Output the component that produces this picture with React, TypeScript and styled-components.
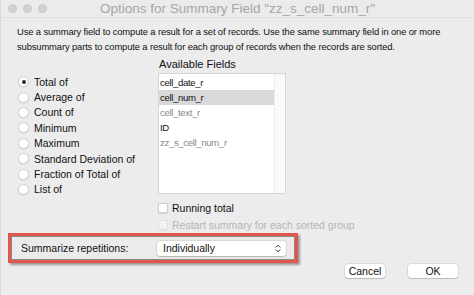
import React, { useState } from 'react';
import styled, { createGlobalStyle } from 'styled-components';

const GlobalStyle = createGlobalStyle`
  html, body {
    margin: 0;
    padding: 0;
    background: #ececec;
  }
  body {
    font-family: 'Liberation Sans', Arial, sans-serif;
  }
`;

const Window = styled.div`
  width: 474px;
  height: 295px;
  background: #ececec;
  display: flex;
  flex-direction: column;
  box-sizing: border-box;
  border-left: 1px solid #d8d8d8;
  overflow: hidden;
`;

const TitleBar = styled.div`
  height: 17px;
  display: flex;
  align-items: center;
  position: relative;
  background: #ebebeb;
  border-bottom: 1px solid #e0e0e0;
`;

const Lights = styled.div`
  display: flex;
  gap: 6px;
  padding-left: 7px;
`;

const Light = styled.span`
  width: 9px;
  height: 9px;
  border-radius: 50%;
  background: #d3d3d3;
  border: 1px solid #c8c8c8;
  box-sizing: border-box;
`;

const Title = styled.div`
  position: absolute;
  left: 0;
  right: 0;
  text-align: center;
  font-size: 13.5px;
  color: #a6a6a6;
  pointer-events: none;
`;

const Body = styled.div`
  flex: 1;
  display: flex;
  flex-direction: column;
  padding: 6px 0 0 16px;
`;

const Description = styled.p`
  margin: 0;
  font-size: 9.4px;
  letter-spacing: -0.12px;
  line-height: 15px;
  color: #111;
  width: 450px;
`;

const Main = styled.div`
  display: flex;
  margin-top: 3px;
`;

const RadioGroup = styled.div`
  width: 141px;
  padding-top: 17px;
  display: flex;
  flex-direction: column;
`;

const RadioRow = styled.label`
  display: flex;
  align-items: center;
  gap: 5px;
  height: 15.4px;
  font-size: 10.5px;
  color: #111;
  margin-left: 1px;
`;

const RadioCircle = styled.span<{ $checked: boolean }>`
  width: 11px;
  height: 11px;
  border-radius: 50%;
  box-sizing: border-box;
  background: #fff;
  border: 1px solid #d2d2d2;
  box-shadow: 0 0.5px 1px rgba(0, 0, 0, 0.12);
  display: flex;
  align-items: center;
  justify-content: center;

  &::after {
    content: '';
    width: 4px;
    height: 4px;
    border-radius: 50%;
    background: ${(p) => (p.$checked ? '#2a2a2a' : 'transparent')};
  }
`;

const FieldsColumn = styled.div`
  display: flex;
  flex-direction: column;
`;

const FieldsLabel = styled.div`
  font-size: 11px;
  color: #111;
  padding-left: 1px;
  height: 16px;
  line-height: 14px;
`;

const ListBox = styled.div`
  width: 128px;
  height: 121px;
  box-sizing: border-box;
  background: #fff;
  border: 1px solid #d6d6d6;
  display: flex;
`;

const ListItems = styled.div`
  flex: 1;
  padding-top: 1px;
`;

const ListItem = styled.div<{ $dim?: boolean; $selected?: boolean }>`
  height: 15px;
  line-height: 15px;
  font-size: 9.6px;
  letter-spacing: -0.35px;
  padding-left: 1px;
  color: ${(p) => (p.$dim ? '#8a8a8a' : '#111')};
  background: ${(p) => (p.$selected ? '#d9d9d9' : 'transparent')};
`;

const Gutter = styled.div`
  width: 10px;
  background: #fafafa;
  border-left: 1px solid #ececec;
`;

const CheckRow = styled.label<{ $disabled?: boolean }>`
  display: flex;
  align-items: center;
  gap: 4px;
  height: 17px;
  font-size: 10.5px;
  color: ${(p) => (p.$disabled ? '#b5b5b5' : '#111')};
`;

const CheckBox = styled.span<{ $disabled?: boolean }>`
  width: 10px;
  height: 10px;
  box-sizing: border-box;
  border-radius: 2px;
  background: ${(p) => (p.$disabled ? '#f3f3f3' : '#fff')};
  border: 1px solid ${(p) => (p.$disabled ? '#e0e0e0' : '#cfcfcf')};
  box-shadow: 0 0.5px 1px rgba(0, 0, 0, ${(p) => (p.$disabled ? 0.04 : 0.12)});
`;

const Checks = styled.div`
  margin-top: 5px;
  display: flex;
  flex-direction: column;
`;

const Highlight = styled.div`
  margin: 0 0 0 -9px;
  width: 290px;
  height: 30px;
  box-sizing: border-box;
  border: 3px solid #e2574c;
  box-shadow: inset 0 0 0 1px rgba(60, 60, 60, 0.55), 2px 2px 2px rgba(0, 0, 0, 0.35);
  display: flex;
  align-items: center;
  padding-left: 10px;
  background: #ebebeb;
`;

const RepLabel = styled.span`
  width: 136px;
  font-size: 10.5px;
  color: #111;
`;

const Popup = styled.div`
  width: 129px;
  height: 15px;
  box-sizing: border-box;
  background: #fff;
  border-radius: 3px;
  box-shadow: 0 0 0 0.5px rgba(0, 0, 0, 0.15), 0 1px 1px rgba(0, 0, 0, 0.15);
  display: flex;
  align-items: center;
  justify-content: space-between;
  padding: 0 5px 0 6px;
  font-size: 10.5px;
  color: #111;
`;

const Buttons = styled.div`
  display: flex;
  justify-content: flex-end;
  gap: 23px;
  margin-top: 1px;
  padding-right: 16px;
`;

const Button = styled.button<{ $wide?: boolean }>`
  width: ${(p) => (p.$wide ? '50px' : '40px')};
  height: 14px;
  padding: 0;
  border: none;
  border-radius: 3px;
  background: #fff;
  box-shadow: 0 0 0 0.5px rgba(0, 0, 0, 0.15), 0 1px 1px rgba(0, 0, 0, 0.15);
  font-family: inherit;
  font-size: 10.5px;
  color: #111;
  line-height: 14px;
`;

const Chevrons = () => (
  <svg width="6" height="9" viewBox="0 0 6 9" fill="none" stroke="#333" strokeWidth="1" strokeLinecap="round" strokeLinejoin="round">
    <path d="M1 3.2 L3 1.2 L5 3.2" />
    <path d="M1 5.8 L3 7.8 L5 5.8" />
  </svg>
);

const options = [
  'Total of',
  'Average of',
  'Count of',
  'Minimum',
  'Maximum',
  'Standard Deviation of',
  'Fraction of Total of',
  'List of',
];

const fields = [
  { name: 'cell_date_r' },
  { name: 'cell_num_r', selected: true },
  { name: 'cell_text_r', dim: true },
  { name: 'ID' },
  { name: 'zz_s_cell_num_r', dim: true },
];

const App = () => {
  const [selected, setSelected] = useState(0);

  return (
    <Window>
      <GlobalStyle />
      <TitleBar>
        <Lights>
          <Light />
          <Light />
          <Light />
        </Lights>
        <Title>Options for Summary Field "zz_s_cell_num_r"</Title>
      </TitleBar>
      <Body>
        <Description>
          Use a summary field to compute a result for a set of records. Use the same summary field in one or more
          subsummary parts to compute a result for each group of records when the records are sorted.
        </Description>
        <Main>
          <RadioGroup>
            {options.map((opt, i) => (
              <RadioRow key={opt} onClick={() => setSelected(i)}>
                <RadioCircle $checked={selected === i} />
                {opt}
              </RadioRow>
            ))}
          </RadioGroup>
          <FieldsColumn>
            <FieldsLabel>Available Fields</FieldsLabel>
            <ListBox>
              <ListItems>
                {fields.map((f) => (
                  <ListItem key={f.name} $dim={f.dim} $selected={f.selected}>
                    {f.name}
                  </ListItem>
                ))}
              </ListItems>
              <Gutter />
            </ListBox>
            <Checks>
              <CheckRow>
                <CheckBox />
                Running total
              </CheckRow>
              <CheckRow $disabled>
                <CheckBox $disabled />
                Restart summary for each sorted group
              </CheckRow>
            </Checks>
          </FieldsColumn>
        </Main>
        <Highlight>
          <RepLabel>Summarize repetitions:</RepLabel>
          <Popup>
            Individually
            <Chevrons />
          </Popup>
        </Highlight>
        <Buttons>
          <Button>Cancel</Button>
          <Button $wide>OK</Button>
        </Buttons>
      </Body>
    </Window>
  );
};

export default App;
